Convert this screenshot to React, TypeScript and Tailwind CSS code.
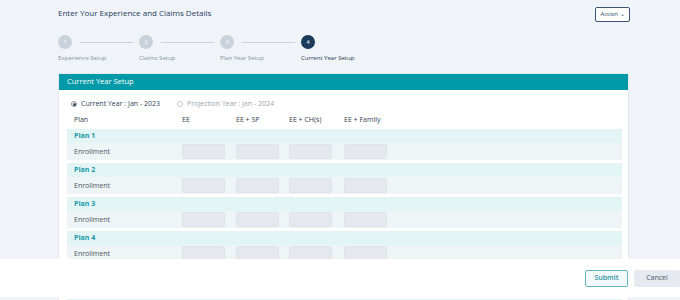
import React from "react";

const steps = [
  { n: 1, label: "Experience Setup" },
  { n: 2, label: "Claims Setup" },
  { n: 3, label: "Plan Year Setup" },
  { n: 4, label: "Current Year Setup", active: true },
];

const cols = ["EE", "EE + SP", "EE + CH(s)", "EE + Family"];
const plans = ["Plan 1", "Plan 2", "Plan 3", "Plan 4", "Plan 5"];

export default function App() {
  return (
    <div
      className="relative w-[680px] h-[300px] overflow-hidden bg-[#f0f4f8]"
      style={{ fontFamily: '"Open Sans", "Noto Sans", sans-serif' }}
    >
      {/* Top bar */}
      <div className="flex items-center justify-between pl-[58px] pr-[50px] pt-[7px] h-[22px]">
        <div className="text-[8px] leading-none text-[#1f3b5b] font-normal mb-[3px]">
          Enter Your Experience and Claims Details
        </div>
        <button className="h-[15px] w-[35px] flex items-center justify-center rounded-[2px] border border-[#3b5674] bg-white text-[6px] text-[#2a4562]">
          Action ⌄
        </button>
      </div>

      {/* Stepper */}
      <div className="flex pl-[58px] mt-[13px]">
        {steps.map((s, i) => (
          <div key={s.n} className="w-[81px] flex flex-col">
            <div className="flex items-center h-[14px]">
              <div
                className={
                  s.active
                    ? "w-[14px] h-[14px] rounded-full bg-[#1b3a5c] text-white text-[5.5px] flex items-center justify-center shrink-0"
                    : "w-[14px] h-[14px] rounded-full bg-[#c9d2da] text-white text-[5.5px] flex items-center justify-center shrink-0"
                }
              >
                {s.n}
              </div>
              {i < steps.length - 1 && (
                <div className="flex-1 h-px bg-[#c9d2da] ml-[8px] mr-[6px]" />
              )}
            </div>
            <div
              className={
                s.active
                  ? "mt-[6px] text-[6px] leading-none text-[#243a52] whitespace-nowrap"
                  : "mt-[6px] text-[6px] leading-none text-[#8593a1] whitespace-nowrap"
              }
            >
              {s.label}
            </div>
          </div>
        ))}
      </div>

      {/* Panel */}
      <div className="ml-[58px] w-[571px] mt-[12px] border border-[#e3e9ee] bg-white">
        <div className="h-[16px] bg-[#0099a7] flex items-center pl-[8px] text-[7.5px] text-white">
          Current Year Setup
        </div>
        <div className="pl-[8px] pr-[6px]">
          <div className="flex items-center h-[14px] mt-[7px] text-[7px]">
            <div className="flex items-center ml-[4px]">
              <span className="w-[6px] h-[6px] rounded-full border border-[#8a96a3] flex items-center justify-center">
                <span className="w-[3px] h-[3px] rounded-full bg-[#3d4d5e]" />
              </span>
              <span className="ml-[4px] text-[#2f4459]">Current Year : Jan - 2023</span>
            </div>
            <div className="flex items-center ml-[17px]">
              <span className="w-[6px] h-[6px] rounded-full border border-[#c3cbd3]" />
              <span className="ml-[4px] text-[#9aa5b0]">Projection Year : Jan - 2024</span>
            </div>
          </div>
          <div className="grid grid-cols-[115px_54px_53px_55px_1fr] items-center h-[18px] pt-[1px] text-[7px] text-[#33414f]">
            <div className="pl-[7px]">Plan</div>
            {cols.map((c) => (
              <div key={c} className="whitespace-nowrap">{c}</div>
            ))}
          </div>
          {plans.map((p) => (
            <div key={p} className="mb-[3px]">
              <div className="h-[14px] bg-[#e3f4f5] flex items-center pl-[7px] text-[7px] font-bold text-[#1a9aa7]">
                {p}
              </div>
              <div className="grid grid-cols-[115px_54px_53px_55px_1fr] items-center h-[17px] bg-[#eff4f7] text-[7px] text-[#4a5663]">
                <div className="pl-[7px] pt-[2px]">Enrollment</div>
                {cols.map((c) => (
                  <div key={c}>
                    <div className="w-[43px] h-[15px] rounded-[2px] bg-[#e5e9ee] border border-[#dde3e9]" />
                  </div>
                ))}
              </div>
            </div>
          ))}
          <div className="h-[14px] bg-[#e3f4f5]" />
        </div>
      </div>

      {/* Footer overlay */}
      <div className="absolute left-0 top-[259px] w-[680px] h-[38px] bg-white flex items-center justify-end">
        <button className="w-[43px] h-[17px] rounded-[2px] border border-[#63b9c1] bg-[#f3f8fa] text-[7px] text-[#2b919c] font-semibold">
          Submit
        </button>
        <button className="ml-[6px] w-[46px] h-[17px] rounded-[2px] bg-[#e6eaf0] text-[7px] text-[#4b5868]">
          Cancel
        </button>
      </div>
    </div>
  );
}
